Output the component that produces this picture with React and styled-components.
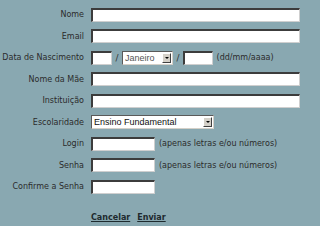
import React from "react";
import styled, { createGlobalStyle } from "styled-components";

const GlobalStyle = createGlobalStyle`
  html, body {
    margin: 0;
    padding: 0;
    background: #89a8b1;
  }
  body {
    font-family: "DejaVu Sans", Verdana, sans-serif;
    font-size: 8px;
    color: #2b2b2b;
  }
`;

const Form = styled.form`
  display: grid;
  grid-template-columns: 84px 1fr;
  grid-auto-rows: 21.5px;
  column-gap: 7px;
  padding-top: 4px;
  width: 320px;
  height: 226px;
  box-sizing: border-box;
  overflow: hidden;
`;

const Label = styled.label`
  display: flex;
  align-items: center;
  justify-content: flex-end;
  white-space: nowrap;
`;

const Field = styled.div`
  display: flex;
  align-items: center;
  gap: ${(p) => p.gap || 4}px;
`;

const Input = styled.input`
  box-sizing: border-box;
  width: ${(p) => p.w}px;
  height: 14px;
  margin: 0;
  padding: 0 2px;
  background: #fff;
  border-style: solid;
  border-width: 2px 1px 1px 2px;
  border-color: #3c3c3c #cfcfcf #cfcfcf #3c3c3c;
  outline: none;
  font: 9px "Liberation Sans", Arial, sans-serif;
`;

const SelectBox = styled.div`
  position: relative;
  width: ${(p) => p.w}px;
  height: 14px;
`;

const Select = styled.select`
  appearance: none;
  box-sizing: border-box;
  width: 100%;
  height: 100%;
  margin: 0;
  padding: 0 0 0 2px;
  background: #fff;
  border-style: solid;
  border-width: 1px;
  border-color: #5a5a5a #d4d0c8 #d4d0c8 #5a5a5a;
  border-radius: 0;
  outline: none;
  color: ${(p) => (p.muted ? "#555" : "#111")};
  font: 9px "Liberation Sans", Arial, sans-serif;
`;

const Arrow = styled.span`
  position: absolute;
  top: 2px;
  right: 2px;
  bottom: 2px;
  width: 9px;
  box-sizing: border-box;
  background: #d4d0c8;
  border: 1px solid;
  border-color: #fff #404040 #404040 #fff;
  pointer-events: none;
  display: flex;
  align-items: center;
  justify-content: center;
  &::after {
    content: "";
    border-left: 2px solid transparent;
    border-right: 2px solid transparent;
    border-top: 2px solid #000;
  }
`;

const Slash = styled.span`
  color: #333;
  font-size: 9px;
`;

const Hint = styled.span`
  white-space: nowrap;
  color: #2b2b2b;
`;

const Actions = styled.div`
  grid-column: 2;
  grid-row: 10;
  align-self: end;
  margin-bottom: -3px;
  display: flex;
  align-items: center;
  gap: 7px;
`;

const Link = styled.a`
  color: #1e2a2e;
  font-weight: bold;
  text-decoration: underline;
  cursor: pointer;
`;

const months = [
  "Janeiro", "Fevereiro", "Março", "Abril", "Maio", "Junho",
  "Julho", "Agosto", "Setembro", "Outubro", "Novembro", "Dezembro",
];

const App = () => {
  return (
    <>
      <GlobalStyle />
      <Form onSubmit={(e) => e.preventDefault()}>
        <Label>Nome</Label>
        <Field><Input w={209} /></Field>

        <Label>Email</Label>
        <Field><Input w={209} /></Field>

        <Label>Data de Nascimento</Label>
        <Field gap={3.5}>
          <Input w={21} />
          <Slash>/</Slash>
          <SelectBox w={51}>
            <Select muted defaultValue="Janeiro">
              {months.map((m) => (
                <option key={m}>{m}</option>
              ))}
            </Select>
            <Arrow />
          </SelectBox>
          <Slash>/</Slash>
          <Input w={30} />
          <Hint>(dd/mm/aaaa)</Hint>
        </Field>

        <Label>Nome da Mãe</Label>
        <Field><Input w={209} /></Field>

        <Label>Instituição</Label>
        <Field><Input w={209} /></Field>

        <Label>Escolaridade</Label>
        <Field>
          <SelectBox w={123}>
            <Select defaultValue="Ensino Fundamental">
              <option>Ensino Fundamental</option>
              <option>Ensino Médio</option>
              <option>Ensino Superior</option>
            </Select>
            <Arrow />
          </SelectBox>
        </Field>

        <Label>Login</Label>
        <Field>
          <Input w={64} />
          <Hint>(apenas letras e/ou números)</Hint>
        </Field>

        <Label>Senha</Label>
        <Field>
          <Input type="password" w={64} />
          <Hint>(apenas letras e/ou números)</Hint>
        </Field>

        <Label>Confirme a Senha</Label>
        <Field><Input type="password" w={64} /></Field>

        <Actions>
          <Link>Cancelar</Link>
          <Link>Enviar</Link>
        </Actions>
      </Form>
    </>
  );
};

export default App;
